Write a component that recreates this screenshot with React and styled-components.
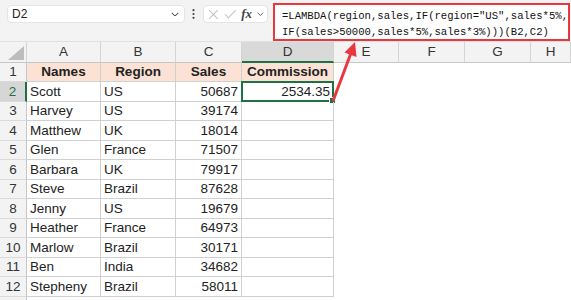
import React from "react";
import styled, { createGlobalStyle, css } from "styled-components";

const GlobalStyle = createGlobalStyle`
  html, body { margin: 0; padding: 0; background: #ffffff; overflow: hidden; }
  body { font-family: "Liberation Sans", Arial, sans-serif; }
`;

const Window = styled.div`
  position: relative;
  width: 571px;
  height: 300px;
  display: flex;
  flex-direction: column;
  overflow: hidden;
  background: #fff;
`;

const FormulaBar = styled.div`
  height: 44px;
  box-sizing: border-box;
  background: #f3f3f3;
  border-bottom: 1px solid #e0e0e0;
  display: flex;
  align-items: flex-start;
  padding: 3px 1px 0 7px;
`;

const NameBox = styled.div`
  margin-top: 2px;
  width: 178px;
  height: 18px;
  box-sizing: border-box;
  background: #fff;
  border: 1px solid #e4e4e4;
  border-radius: 4px;
  display: flex;
  align-items: center;
  justify-content: space-between;
  padding: 0 5px 0 4px;
  font-size: 12px;
  color: #222;
`;

const Dots = styled.div`
  width: 18px;
  height: 22px;
  display: flex;
  align-items: center;
  justify-content: center;
`;

const FxBox = styled.div`
  margin-top: 2px;
  width: 65px;
  height: 18px;
  box-sizing: border-box;
  background: #fff;
  border: 1px solid #e4e4e4;
  border-radius: 4px;
  display: flex;
  align-items: center;
  gap: 5px;
  padding: 0 3px 0 4px;
`;

const FxText = styled.span`
  font-family: "Liberation Serif", "Times New Roman", serif;
  font-style: italic;
  font-weight: bold;
  font-size: 13px;
  color: #444;
  line-height: 1;
  margin-top: -2px;
`;

const FormulaBox = styled.div`
  margin-left: 5px;
  flex: 1;
  height: 38px;
  box-sizing: border-box;
  background: #fff;
  border: 2px solid #e8383d;
  padding: 3px 0 0 7px;
  font-family: "Liberation Mono", "Courier New", monospace;
  font-size: 10.6px;
  line-height: 16px;
  color: #111;
  white-space: pre;
`;

const Sheet = styled.div`
  display: grid;
  grid-template-columns: 27px 74px 75px 66px 92px 65px 66px 66px 1fr;
  grid-template-rows: 20.5px repeat(13, 19.5px);
  font-size: 13.5px;
  color: #222;
`;

const Corner = styled.div`
  background: #f3f3f3;
  border-right: 1px solid #d4d4d4;
  border-bottom: 1px solid #c6c6c6;
  display: flex;
  align-items: flex-end;
  justify-content: flex-end;
  padding: 0 2px 2px 0;
  box-sizing: border-box;
`;

const ColHead = styled.div`
  background: ${(p) => (p.$active ? "#d9d9d9" : "#f3f3f3")};
  border-right: 1px solid #d4d4d4;
  border-bottom: ${(p) => (p.$active ? "2px solid #1e7145" : "1px solid #c6c6c6")};
  box-sizing: border-box;
  display: flex;
  align-items: center;
  justify-content: center;
  font-size: 13.5px;
  color: #333;
`;

const RowHead = styled.div`
  background: ${(p) => (p.$active ? "#d6d6d6" : "#f3f3f3")};
  border-right: ${(p) => (p.$active ? "2px solid #1e7145" : "1px solid #c6c6c6")};
  border-bottom: 1px solid #dadada;
  box-sizing: border-box;
  display: flex;
  align-items: center;
  justify-content: center;
  font-size: 13.5px;
  color: ${(p) => (p.$active ? "#1e7145" : "#333")};
`;

const Cell = styled.div`
  position: relative;
  box-sizing: border-box;
  display: flex;
  align-items: center;
  padding: 0 3px;
  white-space: nowrap;
  justify-content: ${(p) => (p.$align === "right" ? "flex-end" : p.$align === "center" ? "center" : "flex-start")};
  ${(p) =>
    p.$bordered &&
    css`
      border-right: 1px solid #d0d0d0;
      border-bottom: 1px solid #d0d0d0;
    `}
  ${(p) =>
    p.$header &&
    css`
      background: #fbe2d5;
      font-weight: bold;
    `}
`;

const Selection = styled.div`
  position: absolute;
  left: -1px;
  top: -1px;
  right: -1px;
  bottom: -1px;
  border: 2px solid #1e7145;
  pointer-events: none;
`;

const Handle = styled.div`
  position: absolute;
  right: -4px;
  bottom: -4px;
  width: 5px;
  height: 5px;
  background: #1e7145;
  border: 1px solid #fff;
`;

const ArrowLayer = styled.svg`
  position: absolute;
  left: 0;
  top: 0;
  pointer-events: none;
`;

const cols = ["A", "B", "C", "D", "E", "F", "G", "H"];
const empties = [0, 1, 2, 3];

const rows = [
  ["Scott", "US", "50687", "2534.35"],
  ["Harvey", "US", "39174", ""],
  ["Matthew", "UK", "18014", ""],
  ["Glen", "France", "71507", ""],
  ["Barbara", "UK", "79917", ""],
  ["Steve", "Brazil", "87628", ""],
  ["Jenny", "US", "19679", ""],
  ["Heather", "France", "64973", ""],
  ["Marlow", "Brazil", "30171", ""],
  ["Ben", "India", "34682", ""],
  ["Stepheny", "Brazil", "58011", ""],
];

const Chevron = ({ size = 8 }) => (
  <svg width={size} height={size * 0.6} viewBox="0 0 10 6">
    <path d="M1 1 L5 5 L9 1" fill="none" stroke="#555" strokeWidth="1.3" />
  </svg>
);

export default function App() {
  return (
    <>
      <GlobalStyle />
      <Window>
        <FormulaBar>
          <NameBox>
            <span>D2</span>
            <Chevron />
          </NameBox>
          <Dots>
            <svg width="3" height="10" viewBox="0 0 3 10">
              <circle cx="1.5" cy="1.2" r="1.1" fill="#444" />
              <circle cx="1.5" cy="5" r="1.1" fill="#444" />
              <circle cx="1.5" cy="8.8" r="1.1" fill="#444" />
            </svg>
          </Dots>
          <FxBox>
            <svg width="11" height="11" viewBox="0 0 11 11">
              <path d="M1 1 L10 10 M10 1 L1 10" stroke="#c4c4c4" strokeWidth="1.1" fill="none" />
            </svg>
            <svg width="13" height="10" viewBox="0 0 13 10">
              <path d="M1 5 L4.5 9 L12 1" stroke="#c4c4c4" strokeWidth="1.1" fill="none" />
            </svg>
            <FxText>fx</FxText>
            <Chevron size={7} />
          </FxBox>
          <FormulaBox>
            {'=LAMBDA(region,sales,IF(region="US",sales*5%,\nIF(sales>50000,sales*5%,sales*3%)))(B2,C2)'}
          </FormulaBox>
        </FormulaBar>
        <Sheet>
          <Corner>
            <svg width="16" height="14" viewBox="0 0 16 14">
              <path d="M16 0 L16 14 L0 14 Z" fill="#bdbdbd" />
            </svg>
          </Corner>
          {cols.map((c) => (
            <ColHead key={c} $active={c === "D"}>
              {c}
            </ColHead>
          ))}
          <RowHead>1</RowHead>
          {["Names", "Region", "Sales", "Commission"].map((h) => (
            <Cell key={h} $bordered $header $align="center">
              {h}
            </Cell>
          ))}
          {empties.map((i) => (
            <Cell key={"e" + i} />
          ))}
          {rows.map((r, i) => (
            <React.Fragment key={i}>
              <RowHead $active={i === 0}>{i + 2}</RowHead>
              <Cell $bordered>{r[0]}</Cell>
              <Cell $bordered>{r[1]}</Cell>
              <Cell $bordered $align="right">
                {r[2]}
              </Cell>
              <Cell $bordered $align="right">
                {r[3]}
                {i === 0 && (
                  <Selection>
                    <Handle />
                  </Selection>
                )}
              </Cell>
              {empties.map((j) => (
                <Cell key={"e" + j} />
              ))}
            </React.Fragment>
          ))}
          <RowHead />
        </Sheet>
        <ArrowLayer width="571" height="300" viewBox="0 0 571 300">
          <line x1="333" y1="101" x2="351" y2="53" stroke="#e8383d" strokeWidth="3" />
          <polygon points="355,42 356.5,57 344.5,52.5" fill="#e8383d" />
        </ArrowLayer>
      </Window>
    </>
  );
}
